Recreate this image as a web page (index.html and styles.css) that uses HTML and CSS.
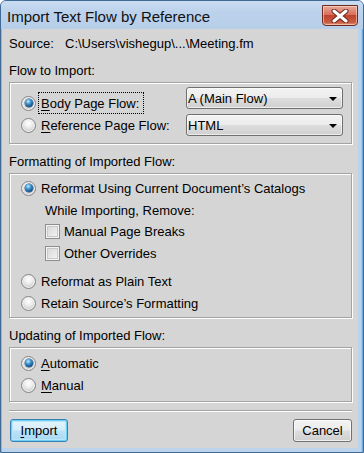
FILE: index.html
```html
<!DOCTYPE html>
<html>
<head>
<meta charset="utf-8">
<link rel="stylesheet" href="styles.css">
</head>
<body>
<div class="window">
  <div class="titlebar">
    <span class="title">Import Text Flow by Reference</span>
    <div class="close">
      <svg width="18" height="14" viewBox="0 0 18 14">
        <path d="M3 2 L15 12 M15 2 L3 12" stroke="#6b2a22" stroke-width="5" stroke-linecap="round"/>
        <path d="M3 2 L15 12 M15 2 L3 12" stroke="#ffffff" stroke-width="3" stroke-linecap="round"/>
      </svg>
    </div>
  </div>
  <div class="content">
    <div class="source"><span class="src-label">Source:</span><span>C:\Users\vishegup\...\Meeting.fm</span></div>

    <div class="section-label first">Flow to Import:</div>
    <div class="group g1">
      <div class="col-left">
        <div class="row r22"><span class="radio checked"></span><span class="focus"><u>B</u>ody Page Flow:</span></div>
        <div class="row r23"><span class="radio"></span><span class="lbl"><u>R</u>eference Page Flow:</span></div>
      </div>
      <div class="col-right">
        <div class="select"><span>A (Main Flow)</span><span class="arrow"></span></div>
        <div class="select"><span>HTML</span><span class="arrow"></span></div>
      </div>
    </div>

    <div class="section-label">Formatting of Imported Flow:</div>
    <div class="group g2">
      <div class="row r22"><span class="radio checked"></span><span class="lbl">Reformat Using Current Document’s Catalogs</span></div>
      <div class="row r22 sub">While Importing, Remove:</div>
      <div class="row r21 sub"><span class="check"></span><span class="clbl">Manual Page Breaks</span></div>
      <div class="row r22 sub"><span class="check"></span><span class="clbl">Other Overrides</span></div>
      <div class="row r22 gap"><span class="radio"></span><span class="lbl">Reformat as Plain Text</span></div>
      <div class="row r23"><span class="radio"></span><span class="lbl">Retain Source’s Formatting</span></div>
    </div>

    <div class="section-label">Updating of Imported Flow:</div>
    <div class="group g3">
      <div class="row r22"><span class="radio checked"></span><span class="lbl"><u>A</u>utomatic</span></div>
      <div class="row r23"><span class="radio"></span><span class="lbl"><u>M</u>anual</span></div>
    </div>

    <div class="separator"></div>

    <div class="buttons">
      <div class="btn default"><u>I</u>mport</div>
      <div class="btn">Cancel</div>
    </div>
  </div>
</div>
</body>
</html>
```

FILE: styles.css
```css
* { box-sizing: border-box; }
html, body { margin: 0; padding: 0; }
body {
  width: 364px;
  height: 453px;
  overflow: hidden;
  font-family: "Liberation Sans", Arial, sans-serif;
  font-size: 13px;
  color: #000;
}
u { text-decoration: underline; text-underline-offset: 2px; }

.window {
  width: 364px;
  height: 453px;
  border: 1px solid #3f6a95;
  border-radius: 6px 6px 0 0;
  background: linear-gradient(90deg, #5aa0dc 0, #bcd3ec 1px, #bcd3ec calc(100% - 2px), #5aa0dc 100%);
  display: flex;
  flex-direction: column;
}

.titlebar {
  height: 28px;
  flex: none;
  display: flex;
  align-items: flex-start;
  justify-content: space-between;
  padding: 0 5px 0 6px;
  background: linear-gradient(#c9dcf1, #bcd2ec 40%, #b7cee9);
  border-radius: 5px 5px 0 0;
}
.title {
  font-size: 15px;
  line-height: 15px;
  margin-top: 8px;
  color: #111;
}
.close {
  width: 36px;
  height: 21px;
  margin-top: 4px;
  border: 1px solid #6e2a20;
  border-radius: 0 0 4px 4px;
  background: linear-gradient(#e9a99a, #d8705c 45%, #c0432c 50%, #c85a40 85%, #e0936f);
  box-shadow: inset 0 0 0 1px rgba(255,230,220,0.55);
  display: flex;
  align-items: center;
  justify-content: center;
}

.content {
  flex: 1;
  margin: 0 5px 4px 1px;
  background: #d5d5d5;
  padding: 7px 6px 0 7px;
  display: flex;
  flex-direction: column;
}

.source {
  line-height: 15px;
  height: 15px;
  display: flex;
}
.src-label { width: 56px; }

.section-label {
  line-height: 15px;
  height: 15px;
  margin-top: 10px;
  margin-bottom: 4px;
}
.section-label.first { margin-top: 12px; }

.group {
  border: 1px solid #a3a3a3;
  box-shadow: inset 1px 1px 0 #fff, 1px 1px 0 #fff;
}

.row {
  display: flex;
  align-items: center;
  flex: none;
}
.r21 { height: 21px; }
.r22 { height: 22px; }
.r23 { height: 23px; }

.g1 {
  height: 62px;
  display: flex;
}
.col-left {
  flex: 1;
  padding-top: 9px;
  display: flex;
  flex-direction: column;
}
.col-right {
  width: 157px;
  margin-right: 8px;
  padding-top: 4px;
  display: flex;
  flex-direction: column;
  gap: 5px;
}

.g2 {
  height: 145px;
  padding-top: 3px;
  display: flex;
  flex-direction: column;
}
.g2 .sub { padding-left: 35px; }
.g2 .gap { margin-top: 6px; }

.g3 {
  height: 55px;
  padding-top: 4px;
  display: flex;
  flex-direction: column;
}

.radio {
  width: 15px;
  height: 15px;
  margin-left: 11px;
  border-radius: 50%;
  border: 1px solid #858585;
  background: radial-gradient(circle at 50% 35%, #ffffff 0, #eeeeee 35%, #cdcdcd 75%, #bdbdbd 100%);
  box-shadow: inset 0 0 0 1px #f4f4f4;
  position: relative;
  flex: none;
}
.radio.checked::after {
  content: "";
  position: absolute;
  left: 2.5px;
  top: 2.5px;
  width: 8px;
  height: 8px;
  border-radius: 50%;
  background: radial-gradient(circle at 40% 30%, #c9eefe 0, #3f96d2 35%, #16548a 70%, #0b3660 100%);
  box-shadow: 0 0 0 0.5px #1b4a78;
}
.lbl { margin-left: 5px; }
.focus {
  margin-left: 2px;
  height: 22px;
  display: flex;
  align-items: center;
  padding: 0 4px 0 2px;
  border: 1px dotted #000;
}

.check {
  width: 15px;
  height: 15px;
  border: 1px solid #8e8e8e;
  background: linear-gradient(135deg, #d4d4d4, #f7f7f7);
  box-shadow: inset 0 0 0 1px #f4f4f4, inset 0 0 0 2px #c9c9c9;
  flex: none;
}
.clbl { margin-left: 4px; }

.select {
  height: 22px;
  border: 1px solid #707070;
  border-radius: 3px;
  background: linear-gradient(#f3f3f3, #ececec 48%, #dddddd 52%, #d0d0d0);
  box-shadow: inset 0 0 0 1px rgba(255,255,255,0.6);
  display: flex;
  align-items: center;
  justify-content: space-between;
  padding: 0 5px 0 1px;
}
.arrow {
  width: 0;
  height: 0;
  border-left: 4px solid transparent;
  border-right: 4px solid transparent;
  border-top: 4px solid #000;
  margin-top: 1px;
}

.separator {
  margin-top: 8px;
  height: 2px;
  border-top: 1px solid #a3a3a3;
  border-bottom: 1px solid #fff;
  flex: none;
}

.buttons {
  margin-top: 7px;
  display: flex;
  justify-content: space-between;
  padding-left: 1px;
}
.btn {
  width: 59px;
  height: 23px;
  border: 1px solid #707070;
  border-radius: 3px;
  background: linear-gradient(#f3f3f3, #ebebeb 48%, #dddddd 52%, #cfcfcf);
  box-shadow: inset 0 0 0 1px rgba(255,255,255,0.7);
  display: flex;
  align-items: center;
  justify-content: center;
}
.btn.default {
  width: 58px;
  border-color: #3c7fb1;
  background: linear-gradient(#e5f4fc, #d3edfb 48%, #bbe2f8 52%, #a8d8f3);
  box-shadow: inset 0 0 0 1px #6cd0f6, inset 0 0 0 2px #b6e7fb;
}
```
